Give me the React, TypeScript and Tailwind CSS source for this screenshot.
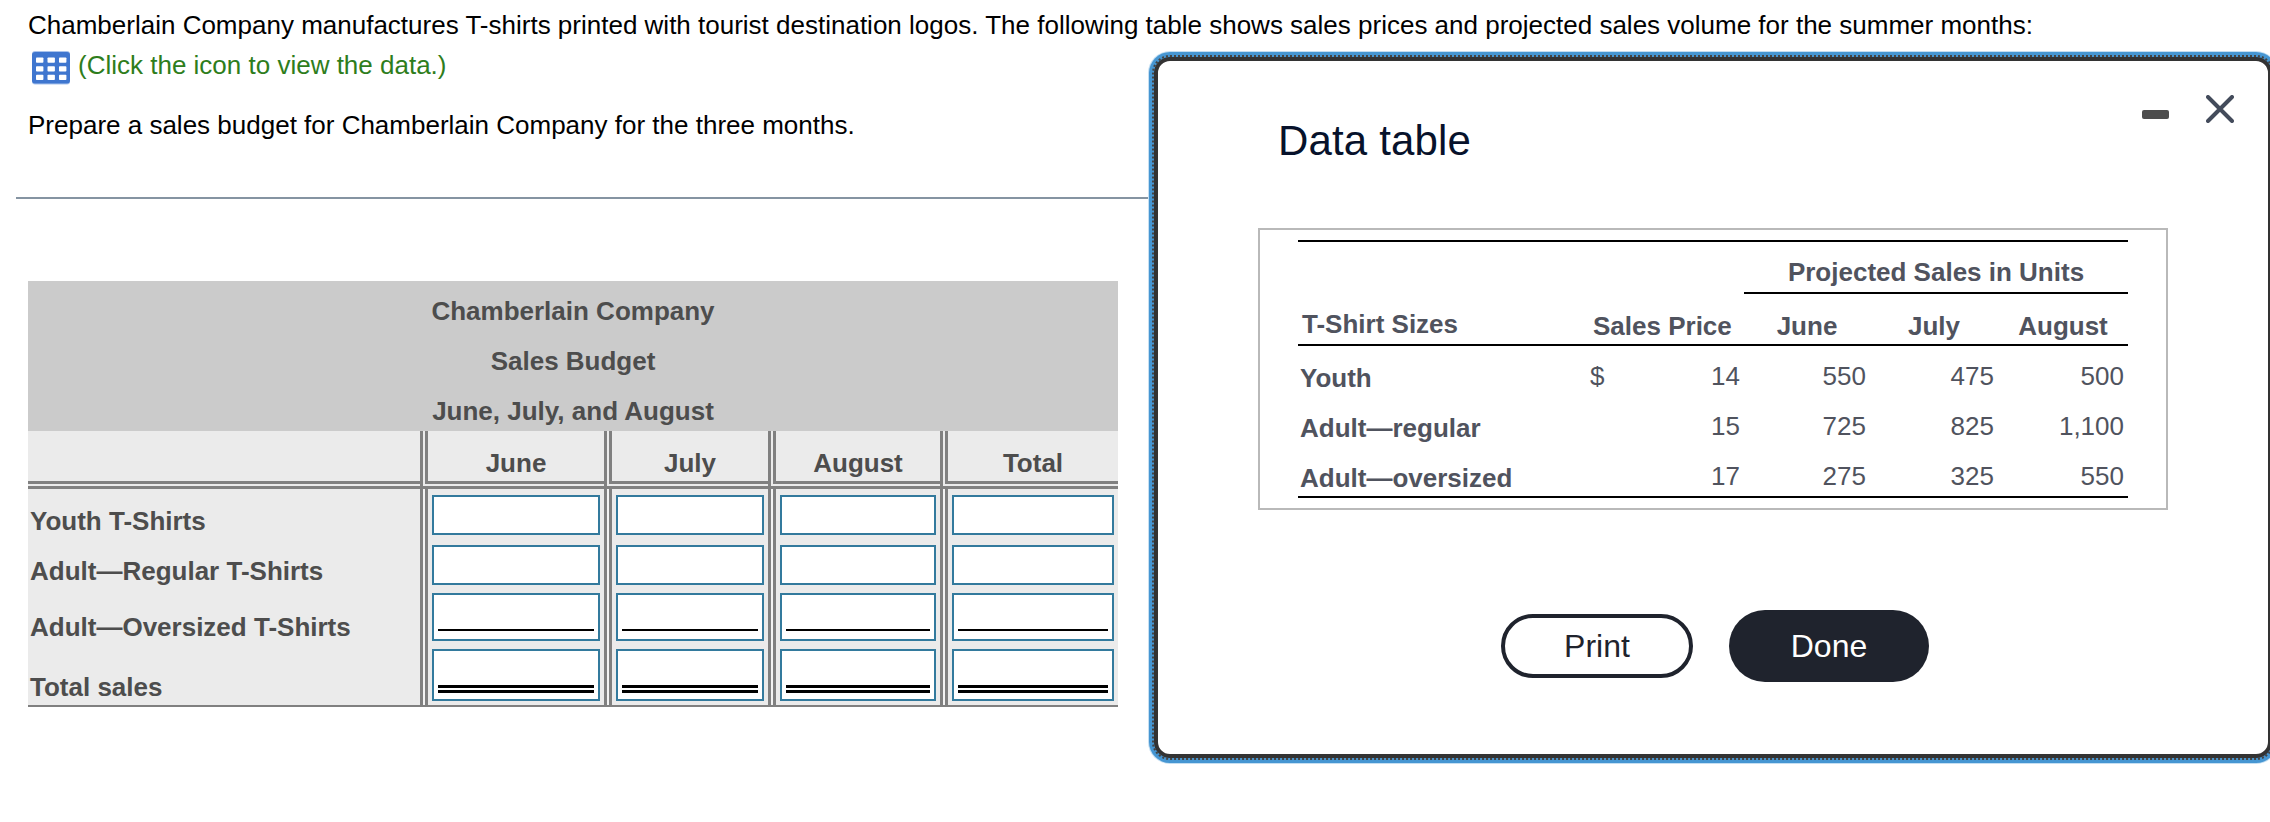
const months = ['June', 'July', 'August', 'Total']

const budgetRows = [
  { label: 'Youth T-Shirts', rule: 'none' },
  { label: 'Adult—Regular T-Shirts', rule: 'none' },
  { label: 'Adult—Oversized T-Shirts', rule: 'single' },
  { label: 'Total sales', rule: 'double' },
]

const rowHeights: Record<string, string> = {
  none: 'h-[50px] pt-1.5 pb-1',
  single: 'h-[56px] py-1',
  double: 'h-[60px] py-1',
}

const salesRows = [
  { size: 'Youth', currency: '$', price: '14', june: '550', july: '475', august: '500' },
  { size: 'Adult—regular', currency: '', price: '15', june: '725', july: '825', august: '1,100' },
  { size: 'Adult—oversized', currency: '', price: '17', june: '275', july: '325', august: '550' },
]

// the 2px gap between columns is the middle of each double rule
const budgetGrid = 'grid grid-cols-[395px_182px_162px_170px_173px] gap-x-0.5'
const salesGrid = 'grid grid-cols-[288px_158px_126px_128px_130px]'

function TableIcon() {
  return (
    <svg width="38" height="34" viewBox="0 0 38 34" className="shrink-0">
      <rect x="0" y="0" width="38" height="33.5" rx="3" fill="#a9c3ec" />
      <rect x="0" y="1" width="38" height="31.5" rx="3" fill="#3f76cf" />
      {[6.5, 15.2, 23.7].map((y) =>
        [4, 15.5, 27].map((x) => (
          <rect key={`${x}-${y}`} x={x} y={y} width="7.4" height="5.3" rx="0.8" fill="#fff" />
        )),
      )}
    </svg>
  )
}

function AnswerBox({ rule }: { rule: string }) {
  return (
    <div className="flex h-full flex-col justify-end border-2 border-[#337a9d] bg-white px-1">
      {rule === 'single' && <div className="mb-2 h-0.5 bg-black" />}
      {rule === 'double' && (
        <div className="mb-1.5 h-2 border-y-[3px] border-black" />
      )}
    </div>
  )
}

function BudgetTable() {
  return (
    <div className="mt-[82px] ml-7 w-[1090px] border-b-2 border-[#808080] font-bold text-[#4d4d4d]">
      <div className="flex h-[150px] flex-col bg-[#cbcbcb] text-center leading-[50px]">
        <p className="h-[50px] pt-[5px]">Chamberlain Company</p>
        <p className="h-[50px] pt-[5px]">Sales Budget</p>
        <p className="h-[50px] pt-[5px]">June, July, and August</p>
      </div>
      <div
        className={`${budgetGrid} h-[58px] border-b-[3px] border-[#808080] bg-[#ebebeb] text-center leading-[64px]`}
      >
        <div className="h-[55px] border-r-[3px] border-[#808080]">
          <div className="h-[53px] border-b-[3px] border-[#808080]" />
        </div>
        {months.map((month) => (
          <div key={month} className="h-[55px] border-r-[3px] border-[#808080] last:border-r-0">
            <div className="h-[53px] border-b-[3px] border-l-[3px] border-[#808080]">{month}</div>
          </div>
        ))}
      </div>
      {budgetRows.map(({ label, rule }) => (
        <div key={label} className={`${budgetGrid} bg-[#f3f3f3]`}>
          <div className="flex items-end border-r-[3px] border-[#808080] bg-[#ebebeb] pl-0.5">
            <span className="leading-[36px]">{label}</span>
          </div>
          {months.map((month) => (
            <div
              key={month}
              className={`${rowHeights[rule]} border-x-[3px] border-[#808080] bg-[#ebebeb] px-1 last:border-r-0`}
            >
              <AnswerBox rule={rule} />
            </div>
          ))}
        </div>
      ))}
    </div>
  )
}

function DataTable() {
  return (
    <div className="ml-[100px] h-[282px] w-[910px] border-2 border-[#b9b9b9] px-[38px] pt-2.5 text-[#50535e]">
      <div className="border-y-2 border-black">
        <div className={`${salesGrid} h-[104px] border-b-2 border-black font-bold`}>
          <div className="self-end pb-0.5 pl-1 leading-[36px]">T-Shirt Sizes</div>
          <div className="self-end pl-[7px] leading-[36px]">Sales Price</div>
          <div className="col-span-3 flex flex-col">
            <div className="h-[52px] border-b-2 border-black pt-1 text-center leading-[52px]">
              Projected Sales in Units
            </div>
            <div className="grid h-[50px] grid-cols-[126px_128px_130px] text-center leading-[64px]">
              <span>June</span>
              <span>July</span>
              <span>August</span>
            </div>
          </div>
        </div>
        {salesRows.map((row) => (
          <div key={row.size} className={`${salesGrid} h-[50px] text-right leading-[60px]`}>
            <span className="pt-0.5 pl-0.5 text-left font-bold">{row.size}</span>
            <span className="flex justify-between px-1">
              <span>{row.currency}</span>
              <span>{row.price}</span>
            </span>
            <span className="pr-1">{row.june}</span>
            <span className="pr-1">{row.july}</span>
            <span className="pr-1">{row.august}</span>
          </div>
        ))}
      </div>
    </div>
  )
}

function DataDialog() {
  return (
    <div
      role="dialog"
      className="absolute top-[57px] left-[1154px] h-[701px] w-[1118px] rounded-2xl border-4 border-[#333] bg-white shadow-[0_0_0_5px_#4696d2,0_0_0_6px_#c5dff2] outline-2 outline-dotted outline-[#444]"
    >
      <div className="flex h-[167px] justify-between pr-[34px] pl-[120px]">
        <h2 className="pt-[56px] text-[42px] leading-[48px] tracking-[0.15px] text-[#07122b]">
          Data table
        </h2>
        <div className="flex items-start gap-[37px] pt-[34px]">
          <button className="mt-[15px] h-[9px] w-[27px] rounded-[2px] bg-[#4d4d4d]" />
          <button>
            <svg width="28" height="28" viewBox="0 0 28 28" className="block">
              <path
                d="M2 2L26 26M26 2L2 26"
                stroke="#434b5b"
                strokeWidth="4"
                strokeLinecap="round"
              />
            </svg>
          </button>
        </div>
      </div>
      <DataTable />
      <div className="mt-[100px] ml-[343px] flex items-center gap-9 text-[32px] leading-none">
        <button className="h-16 w-48 rounded-full border-4 border-[#1f232d] text-[#1f232d]">
          Print
        </button>
        <button className="h-[72px] w-[200px] rounded-full bg-[#1f232d] text-white">Done</button>
      </div>
    </div>
  )
}

export default function App() {
  return (
    <div className="relative h-[822px] w-[2270px] overflow-hidden bg-white font-['Liberation_Sans',Arial,sans-serif] text-[26px] text-black">
      <div className="flex h-[197px] flex-col pt-2.5 pl-7">
        <p className="leading-[30px] whitespace-nowrap">
          Chamberlain Company manufactures T-shirts printed with tourist destination logos. The
          following table shows sales prices and projected sales volume for the summer months:
        </p>
        <div className="mt-[11px] flex h-[34px] gap-2 pl-1">
          <TableIcon />
          <span className="leading-[29px] text-[#2e7d1c]">(Click the icon to view the data.)</span>
        </div>
        <p className="mt-[25px] leading-[30px]">
          Prepare a sales budget for Chamberlain Company for the three months.
        </p>
      </div>
      <hr className="ml-4 border-t-2 border-[#8594a2]" />
      <BudgetTable />
      <DataDialog />
    </div>
  )
}
